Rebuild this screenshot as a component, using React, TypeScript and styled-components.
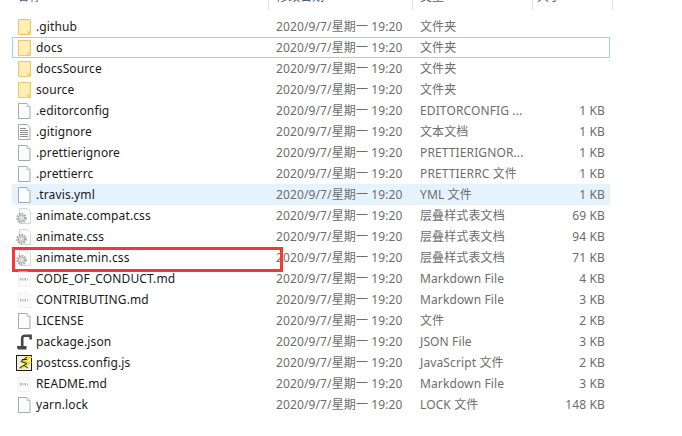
import React from "react";
import styled, { createGlobalStyle } from "styled-components";

const GlobalStyle = createGlobalStyle`
  html, body {
    margin: 0;
    padding: 0;
    background: #ffffff;
  }
  body {
    width: 682px;
    height: 436px;
    overflow: hidden;
    font-family: "Noto Sans", "Noto Sans CJK SC", sans-serif;
    font-size: 12px;
    letter-spacing: 0.12px;
  }
`;

const Page = styled.div`
  width: 682px;
  height: 436px;
  padding-left: 12px;
  box-sizing: border-box;
`;

const Header = styled.div`
  display: grid;
  grid-template-columns: 257px 144px 120px 80px;
  height: 16px;
  align-items: start;
`;

const HeaderCell = styled.div`
  height: 10px;
  overflow: hidden;
  padding-left: ${(props: { $indent: number }) => props.$indent}px;
  border-right: 1px solid #e3e5e8;
  color: #4c607a;
  line-height: 12px;

  span {
    display: block;
    margin-top: -9px;
  }
`;

const List = styled.div`
  display: flex;
  flex-direction: column;
  width: 598px;
`;

type RowState = "focused" | "hover" | "none";

const Row = styled.div<{ $state: RowState }>`
  position: relative;
  display: grid;
  grid-template-columns: 264px 144px 1fr 80px;
  align-items: center;
  height: 21px;
  box-sizing: border-box;
  line-height: 21px;
  background: ${(props) => (props.$state === "hover" ? "#e5f3ff" : "transparent")};
  box-shadow: ${(props) =>
    props.$state === "focused" ? "inset 0 0 0 1px #99d1ff" : "none"};
`;

const NameCell = styled.div`
  display: flex;
  align-items: center;
  gap: 4px;
  padding-left: 4px;
  color: #1a1a1a;
`;

const IconBox = styled.span`
  display: block;
  width: 16px;
  height: 16px;
  flex: none;
`;

const Cell = styled.div`
  color: #6d6d6d;
  white-space: nowrap;
`;

const SizeCell = styled(Cell)`
  text-align: right;
  padding-right: 5px;
`;

const Callout = styled.div`
  position: absolute;
  left: 0;
  top: 0;
  width: 271px;
  height: 25px;
  box-sizing: border-box;
  border: 3px solid #f5373a;
  pointer-events: none;
`;

function FolderIcon() {
  return (
    <svg width="16" height="16" viewBox="0 0 16 16">
      <path d="M2.5 0.5h12v15h-12z" fill="#ffe89f" stroke="#e8c96f" strokeWidth="1" />
      <path d="M3.5 1.5h10v10h-3v3.5h-7z" fill="#ffeeb6" />
      <path d="M11.5 12h3v3.5h-3z" fill="#f4d474" />
    </svg>
  );
}

function FileIcon() {
  return (
    <svg width="16" height="16" viewBox="0 0 16 16">
      <path d="M2.5 0.5h8.5l3 3v12h-11.5z" fill="#fbfcfd" stroke="#a6a9ad" strokeWidth="1" />
      <path d="M11 0.5v3h3" fill="#eceef0" stroke="#c2c4c7" strokeWidth="1" />
    </svg>
  );
}

function TextFileIcon() {
  return (
    <svg width="16" height="16" viewBox="0 0 16 16">
      <path d="M2.5 0.5h8.5l3 3v12h-11.5z" fill="#fbfcfd" stroke="#a6a9ad" strokeWidth="1" />
      <path d="M4 4.5h6M4 6.5h8M4 8.5h8M4 10.5h8M4 12.5h8" stroke="#8c8f93" strokeWidth="1" />
    </svg>
  );
}

function GearFileIcon() {
  return (
    <svg width="16" height="16" viewBox="0 0 16 16">
      <path d="M3.5 0.5h8l3 3v12h-11z" fill="#fbfcfd" stroke="#d4d6d8" strokeWidth="1" />
      <circle cx="5.5" cy="10" r="4.4" fill="none" stroke="#a4a8ab" strokeWidth="1.8" strokeDasharray="1.7 1.2" />
      <circle cx="5.5" cy="10" r="3.2" fill="#e3e5e6" stroke="#999da0" strokeWidth="0.8" />
      <circle cx="5.5" cy="10" r="1.4" fill="#fafafa" stroke="#a4a8ab" strokeWidth="0.5" />
    </svg>
  );
}

function MarkdownIcon() {
  return (
    <svg width="16" height="16" viewBox="0 0 16 16">
      <path d="M2.5 1h9l3 3v11.5h-12z" fill="#fbfbfb" stroke="#f1f1f1" strokeWidth="1" />
      <path d="M4.5 7v2.5M6 7v2.5M8 7v2.5M9.5 7v2.5M11.5 7.5v2" stroke="#b4b4b4" strokeWidth="1" />
    </svg>
  );
}

function PackageIcon() {
  return (
    <svg width="16" height="16" viewBox="0 0 16 16">
      <path d="M6.2 13V4.5C6.2 2.6 7.2 1.8 9 1.8h5.6V5.5" fill="none" stroke="#474747" strokeWidth="2.6" />
      <path d="M1 12h9.5v3.5H2.5C1.5 15.5 1 14 1 12z" fill="#474747" />
    </svg>
  );
}

function ScriptIcon() {
  return (
    <svg width="16" height="16" viewBox="0 0 16 16">
      <rect x="0.5" y="0.5" width="15" height="15" fill="#f1efe2" stroke="#1d1d1d" />
      <path d="M8.5 3h4L6.5 6.5l6 1.5L4 13.5" fill="none" stroke="#f0dc1e" strokeWidth="2.8" />
      <path d="M11 2 5 6.5 11 8.5 3.5 13M8 10.5l4 2.5M6 4.5h5" fill="none" stroke="#2a2a1a" strokeWidth="1" />
    </svg>
  );
}

const icons = {
  folder: FolderIcon,
  file: FileIcon,
  text: TextFileIcon,
  gear: GearFileIcon,
  markdown: MarkdownIcon,
  package: PackageIcon,
  script: ScriptIcon,
};

type FileEntry = {
  name: string;
  icon: keyof typeof icons;
  type: string;
  size?: string;
  state?: RowState;
  marked?: boolean;
};

const files: FileEntry[] = [
  { name: ".github", icon: "folder", type: "文件夹" },
  { name: "docs", icon: "folder", type: "文件夹", state: "focused" },
  { name: "docsSource", icon: "folder", type: "文件夹" },
  { name: "source", icon: "folder", type: "文件夹" },
  { name: ".editorconfig", icon: "file", type: "EDITORCONFIG ...", size: "1 KB" },
  { name: ".gitignore", icon: "text", type: "文本文档", size: "1 KB" },
  { name: ".prettierignore", icon: "file", type: "PRETTIERIGNOR...", size: "1 KB" },
  { name: ".prettierrc", icon: "file", type: "PRETTIERRC 文件", size: "1 KB" },
  { name: ".travis.yml", icon: "file", type: "YML 文件", size: "1 KB", state: "hover" },
  { name: "animate.compat.css", icon: "gear", type: "层叠样式表文档", size: "69 KB" },
  { name: "animate.css", icon: "gear", type: "层叠样式表文档", size: "94 KB" },
  { name: "animate.min.css", icon: "gear", type: "层叠样式表文档", size: "71 KB", marked: true },
  { name: "CODE_OF_CONDUCT.md", icon: "markdown", type: "Markdown File", size: "4 KB" },
  { name: "CONTRIBUTING.md", icon: "markdown", type: "Markdown File", size: "3 KB" },
  { name: "LICENSE", icon: "file", type: "文件", size: "2 KB" },
  { name: "package.json", icon: "package", type: "JSON File", size: "3 KB" },
  { name: "postcss.config.js", icon: "script", type: "JavaScript 文件", size: "2 KB" },
  { name: "README.md", icon: "markdown", type: "Markdown File", size: "3 KB" },
  { name: "yarn.lock", icon: "file", type: "LOCK 文件", size: "148 KB" },
];

const columns = [
  { label: "名称", indent: 5 },
  { label: "修改日期", indent: 7 },
  { label: "类型", indent: 7 },
  { label: "大小", indent: 4 },
];

export default function App() {
  return (
    <Page>
      <GlobalStyle />
      <Header>
        {columns.map(({ label, indent }) => (
          <HeaderCell key={label} $indent={indent}>
            <span>{label}</span>
          </HeaderCell>
        ))}
      </Header>
      <List>
        {files.map((file) => {
          const Icon = icons[file.icon];
          return (
            <Row key={file.name} $state={file.state ?? "none"}>
              <NameCell>
                <IconBox>
                  <Icon />
                </IconBox>
                {file.name}
              </NameCell>
              <Cell>2020/9/7/星期一 19:20</Cell>
              <Cell>{file.type}</Cell>
              <SizeCell>{file.size}</SizeCell>
              {file.marked && <Callout />}
            </Row>
          );
        })}
      </List>
    </Page>
  );
}
